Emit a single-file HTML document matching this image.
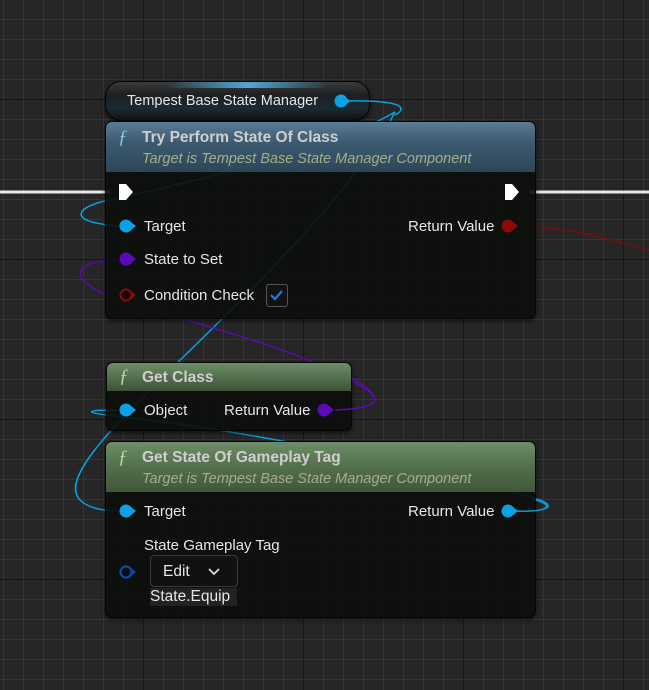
<!DOCTYPE html>
<html><head><style>
body{margin:0;width:649px;height:690px;overflow:hidden;position:relative;font-family:"Liberation Sans",sans-serif;background:#262626}
.grid{position:absolute;left:0;top:0;width:649px;height:690px;
background-image:
linear-gradient(90deg,#171717 1px,transparent 1px),
linear-gradient(#171717 1px,transparent 1px),
linear-gradient(90deg,#353535 1px,transparent 1px),
linear-gradient(#353535 1px,transparent 1px);
background-size:160px 160px,160px 160px,20px 20px,20px 20px;
background-position:143px 0,0 99px,3px 0,0 19px;background-color:#262626}
.node{position:absolute;background:rgba(12,14,12,0.9);border:1px solid #050505;border-radius:7px;box-shadow:0 2px 5px rgba(0,0,0,.6);overflow:hidden}
.hdr{position:absolute;left:0;right:0;top:0}
.t{position:absolute;color:#e6e6e6;font-size:15px;white-space:nowrap}
.ti{position:absolute;color:#cfcfcf;font-weight:bold;font-size:15.5px;white-space:nowrap}
.sub{position:absolute;font-style:italic;font-size:14.5px;color:#a7ad8a;white-space:nowrap}
.f{position:absolute;font-style:italic;font-family:"Liberation Serif",serif;font-size:19px}
svg{position:absolute;left:0;top:0}
</style></head><body>
<div class="grid"></div>
<svg width="649" height="690" style="z-index:1">
<line x1="0" y1="192" x2="110" y2="192" stroke="#e8e8e8" stroke-width="3"/>
<line x1="530" y1="192" x2="649" y2="192" stroke="#e8e8e8" stroke-width="3"/>
<path d="M515,226 C580,228 610,240 649,250" stroke="#7a0c0c" stroke-width="1.5" fill="none"/>
<path d="M120,226 C60,222 80,205 110,200 C200,180 330,150 395,112" stroke="#0aa1e0" stroke-width="1.5" fill="none"/>
<path d="M395,112 C350,200 220,320 160,380 C110,430 60,480 80,500 C90,510 110,511 120,511" stroke="#0aa1e0" stroke-width="1.5" fill="none"/>
<path d="M120,259 C60,262 75,285 120,300 C200,325 300,350 350,380" stroke="#5a0ab0" stroke-width="1.5" fill="none"/>
<path d="M120,410 C70,410 90,414 150,420 C300,440 480,480 540,500 C560,508 540,512 515,511" stroke="#0aa1e0" stroke-width="1.4" fill="none"/>
<path d="M335,410 C390,408 380,395 350,380" stroke="#5a0ab0" stroke-width="1.5" fill="none"/>
</svg>
<svg width="649" height="690" style="z-index:3">
<path d="M348,101 C410,100 405,110 395,115" stroke="#0aa1e0" stroke-width="1.5" fill="none"/>
<path d="M335,410 C390,408 380,395 352,378" stroke="#5a0ab0" stroke-width="1.5" fill="none"/>
<path d="M536,500 C560,508 540,512 515,511" stroke="#0aa1e0" stroke-width="1.4" fill="none"/>
</svg>
<!-- pill -->
<div class="node" style="left:105px;top:81px;width:263px;height:38px;border-radius:16px;z-index:2;background:linear-gradient(180deg,#3a3a3a 0%,#1c1f21 35%,#1a2a33 70%,#111 100%)">
<div style="position:absolute;left:60px;right:40px;top:0;height:6px;background:linear-gradient(90deg,transparent,#4fa8d8,transparent)"></div>
<div class="t" style="left:21px;top:11px;font-size:14.5px">Tempest Base State Manager</div>
</div>
<!-- node1 -->
<div class="node" style="left:105px;top:121px;width:429px;height:196px;z-index:2">
<div class="hdr" style="height:50px;background:linear-gradient(180deg,#5b7d96 0%,#3d5a70 40%,#2d4658 100%)"></div>
<div class="f" style="left:12px;top:5px;color:#8ec7ea">ƒ</div>
<div class="ti" style="left:36px;top:7px">Try Perform State Of Class</div>
<div class="sub" style="left:36px;top:29px">Target is Tempest Base State Manager Component</div>
<div class="t" style="left:38px;top:96px">Target</div>
<div class="t" style="left:38px;top:129px">State to Set</div>
<div class="t" style="left:38px;top:165px">Condition Check</div>
<div class="t" style="left:302px;top:96px">Return Value</div>
<div style="position:absolute;left:160px;top:162px;width:20px;height:21px;border:1px solid #555;border-radius:3px;background:#121212"></div>
</div>
<!-- get class -->
<div class="node" style="left:106px;top:362px;width:244px;height:67px;z-index:2">
<div class="hdr" style="height:28px;background:linear-gradient(180deg,#6f8d68,#3d5238)"></div>
<div class="f" style="left:12px;top:3px;color:#aee0a0">ƒ</div>
<div class="ti" style="left:35px;top:6px">Get Class</div>
<div class="t" style="left:37px;top:39px">Object</div>
<div class="t" style="left:117px;top:39px">Return Value</div>
</div>
<!-- node3 -->
<div class="node" style="left:105px;top:441px;width:429px;height:175px;z-index:2">
<div class="hdr" style="height:50px;background:linear-gradient(180deg,#6f8d68 0%,#536f4c 50%,#41573b 100%)"></div>
<div class="f" style="left:12px;top:5px;color:#aee0a0">ƒ</div>
<div class="ti" style="left:36px;top:7px">Get State Of Gameplay Tag</div>
<div class="sub" style="left:36px;top:29px">Target is Tempest Base State Manager Component</div>
<div class="t" style="left:38px;top:61px">Target</div>
<div class="t" style="left:302px;top:61px">Return Value</div>
<div class="t" style="left:38px;top:95px">State Gameplay Tag</div>
<div style="position:absolute;left:44px;top:113px;width:86px;height:30px;border:1px solid #3a3a3a;border-radius:4px;background:#111"></div>
<div class="t" style="left:57px;top:121px;font-size:15.5px">Edit</div>
<svg width="14" height="10" style="left:101px;top:125px"><path d="M2,2 L7,7 L12,2" stroke="#ddd" stroke-width="1.8" fill="none"/></svg>
<div class="t" style="left:44px;top:146px;width:87px;background:#222;font-size:15.5px">State.Equip</div>
</div>
<!-- pins -->
<svg width="649" height="690" style="z-index:4">
<path d="M119,184 h7 l7,8 l-7,8 h-7 z" fill="#fff"/>
<path d="M505,184 h7 l7,8 l-7,8 h-7 z" fill="#fff"/>
<g fill="#0aa1e8">
<circle cx="341" cy="101" r="6.5"/><path d="M346,98 l5,3 l-5,3z"/>
<circle cx="126" cy="226" r="6.5"/><path d="M131,222 l5,4 l-5,4z"/>
<circle cx="126" cy="410" r="6.5"/><path d="M131,406 l5,4 l-5,4z"/>
<circle cx="126" cy="511" r="6.5"/><path d="M131,507 l5,4 l-5,4z"/>
<circle cx="508" cy="511" r="6.5"/><path d="M513,507 l5,4 l-5,4z"/>
</g>
<g fill="#5a0ab8">
<circle cx="126" cy="259" r="6.5"/><path d="M131,255 l5,4 l-5,4z"/>
<circle cx="324" cy="410" r="6.5"/><path d="M329,406 l5,4 l-5,4z"/>
</g>
<circle cx="508" cy="226" r="6.5" fill="#8a0a0a"/><path d="M513,222 l5,4 l-5,4z" fill="#8a0a0a"/>
<circle cx="126" cy="295" r="5.5" fill="#150505" stroke="#8a0a0a" stroke-width="2"/><path d="M131,291 l5,4 l-5,4z" fill="#8a0a0a"/>
<circle cx="126" cy="572" r="5.5" fill="#050a15" stroke="#0a4aa8" stroke-width="2.2"/><path d="M131,568 l5,4 l-5,4z" fill="#0a4aa8"/>
<path d="M271,295 l4,4 l7,-8" stroke="#1a7ae8" stroke-width="2.2" fill="none"/>
</svg>
</body></html>
